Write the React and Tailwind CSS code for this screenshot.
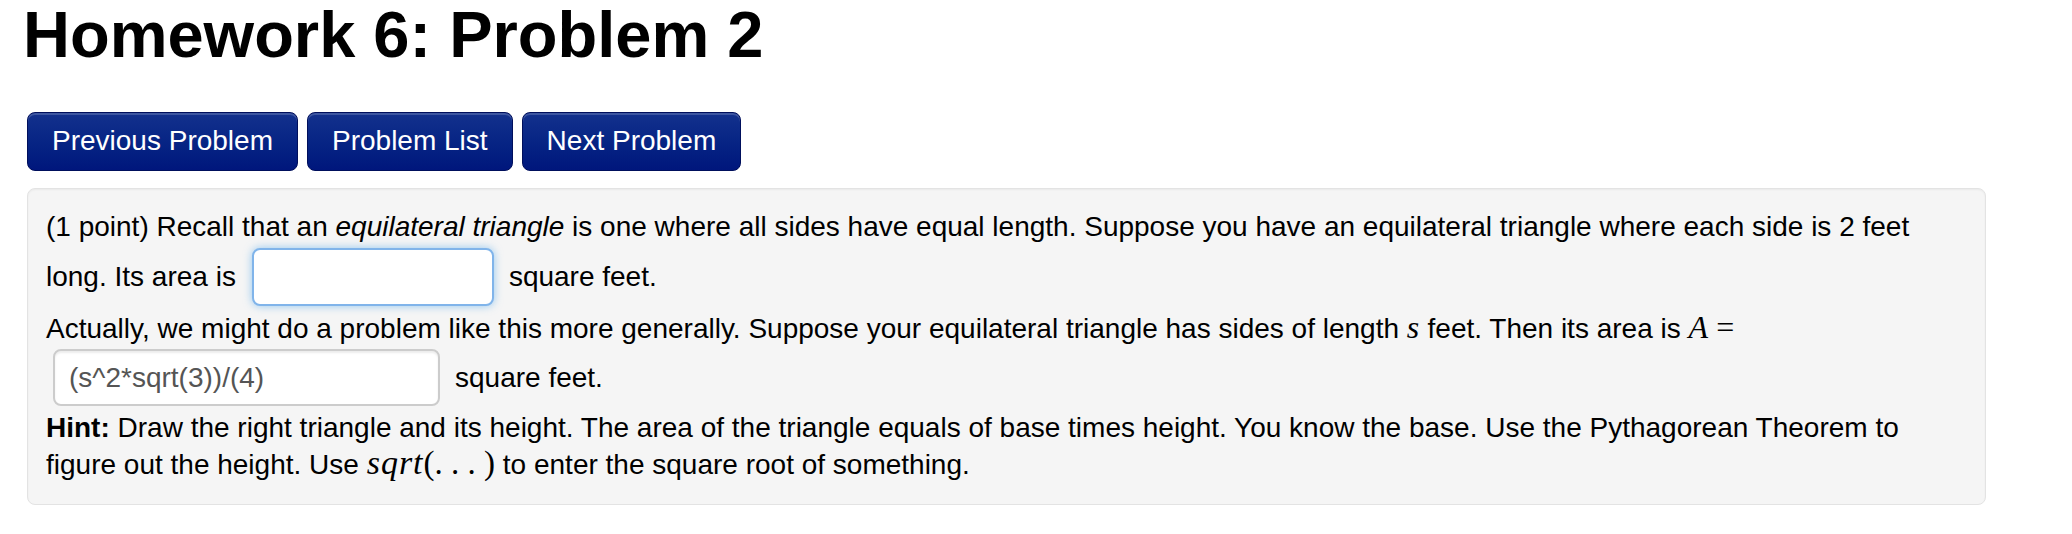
import React from "react";

const sans = { fontFamily: '"Liberation Sans", Arial, Helvetica, sans-serif' };
const serif = { fontFamily: '"Liberation Serif", "Times New Roman", serif' };

function M({ children, wide }) {
  // MathJax-ish inline math
  return (
    <span className={wide ? "italic text-[34px] tracking-[1px]" : "italic text-[32px] tracking-[0.5px]"} style={serif}>
      {children}
    </span>
  );
}

function NavButton({ children }) {
  return (
    <button className="h-[59px] px-[24px] rounded-lg border border-[#000f5c] bg-gradient-to-b from-[#13318d] to-[#00167c] text-white text-[28px] leading-[40px] shadow-[inset_0_2px_0_rgba(255,255,255,0.18)]">
      {children}
    </button>
  );
}

export default function App() {
  return (
    <div className="min-h-screen bg-white pl-[27px] text-black" style={sans}>
      <h1 className="text-[65px] leading-[1.1] font-bold -ml-[4px] -mt-[1px]">Homework 6: Problem 2</h1>

      <div className="flex gap-[9px] mt-[41px]">
        <NavButton>Previous Problem</NavButton>
        <NavButton>Problem List</NavButton>
        <NavButton>Next Problem</NavButton>
      </div>

      <div className="mt-[17px] w-[1959px] rounded-lg border border-[#e3e3e3] bg-[#f5f5f5] px-[18px] pt-[18px] pb-[24px] text-[28px] leading-[40px] shadow-[inset_0_1px_2px_rgba(0,0,0,0.05)]">
        <div className="h-[40px] whitespace-nowrap">
          (1 point) Recall that an <i>equilateral triangle</i> is one where all sides have equal length. Suppose you have an equilateral triangle where each side is 2 feet
        </div>

        <div className="mt-[1px] h-[58px] flex items-center whitespace-nowrap">
          <span>long. Its area is</span>
          <input
            type="text"
            className="ml-[16px] w-[242px] h-[58px] rounded-lg bg-white border-2 border-[#80b4ea] shadow-[0_0_8px_rgba(82,168,236,0.6)] outline-none px-[12px] text-[28px]"
          />
          <span className="ml-[15px]">square feet.</span>
        </div>

        <div className="mt-[1px] h-[40px] whitespace-nowrap">
          Actually, we might do a problem like this more generally. Suppose your equilateral triangle has sides of length <M>s</M> feet. Then its area is <M>A</M>{" "}
          <span className="text-[32px]" style={serif}>=</span>
        </div>

        <div className="mt-[2px] h-[58px] flex items-center whitespace-nowrap">
          <input
            type="text"
            readOnly
            value="(s^2*sqrt(3))/(4)"
            className="ml-[7px] w-[387px] h-[57px] rounded-lg bg-white border-2 border-[#cccccc] shadow-[inset_0_2px_2px_rgba(0,0,0,0.075)] outline-none px-[14px] text-[28px] text-[#555555]"
          />
          <span className="ml-[15px]">square feet.</span>
        </div>

        <div className="mt-[3px] h-[35px] leading-[35px] whitespace-nowrap">
          <b>Hint:</b> Draw the right triangle and its height. The area of the triangle equals of base times height. You know the base. Use the Pythagorean Theorem to
        </div>
        <div className="h-[35px] leading-[35px] whitespace-nowrap">
          figure out the height. Use <M wide>sqrt</M>
          <span className="text-[33px]" style={serif}>(. . . )</span> to enter the square root of something.
        </div>
      </div>
    </div>
  );
}
